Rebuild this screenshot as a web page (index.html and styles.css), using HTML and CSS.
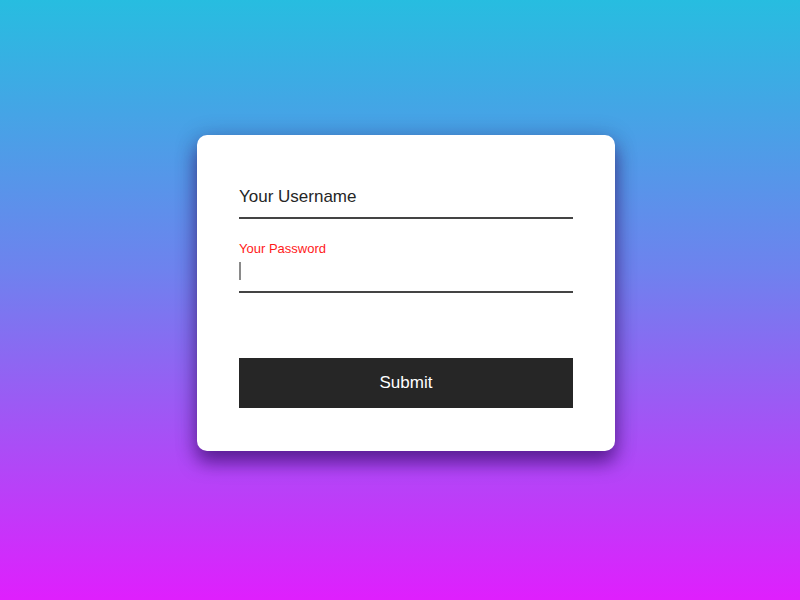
FILE: index.html
```html
<!DOCTYPE html>
<html lang="en">
<head>
  <meta charset="UTF-8" />
  <meta name="viewport" content="width=device-width, initial-scale=1" />
  <title>Login</title>
  <link rel="stylesheet" href="styles.css">
</head>
<body>
  <form class="login-card">
    <div class="field">
      <input type="text" class="field-input username" placeholder="Your Username" />
    </div>

    <div class="field field-active">
      <label class="field-label" for="password">Your Password</label>
      <div class="input-wrap">
        <input type="password" id="password" class="field-input" />
        <span class="caret"></span>
      </div>
    </div>

    <button type="submit" class="submit-btn">Submit</button>
  </form>
</body>
</html>
```

FILE: styles.css
```css
/* Gradient login card */
html, body {
  height: 100%;
}

body {
  margin: 0;
  font-family: 'Liberation Sans', Arial, sans-serif;
  background: linear-gradient(180deg, #27bde0 0%, #6e82ee 45%, #df1ffd 100%);
  display: flex;
  justify-content: center;
  align-items: flex-start;
  padding: 135px 0 0 12px;
  box-sizing: border-box;
}

.login-card {
  width: 418px;
  box-sizing: border-box;
  background: #fff;
  border-radius: 10px;
  padding: 47px 42px 43px;
  box-shadow: 0 12px 18px rgba(45, 0, 95, 0.55), 0 2px 22px rgba(20, 10, 60, 0.25);
  display: flex;
  flex-direction: column;
}

/* Fields */
.field {
  display: flex;
  flex-direction: column;
}

.field + .field {
  margin-top: 22px;
}

.field-input {
  height: 37px;
  box-sizing: border-box;
  border: none;
  border-bottom: 2px solid #444;
  padding: 0;
  font-family: inherit;
  font-size: 17px;
  color: #222;
  outline: none;
  background: transparent;
}

.username {
  padding-bottom: 6px;
}

.field-input::placeholder {
  color: #262626;
  opacity: 1;
}

.field-label {
  font-size: 13px;
  line-height: 15px;
  color: #ff1a1a;
}

.input-wrap {
  position: relative;
  display: flex;
  flex-direction: column;
}

.caret {
  position: absolute;
  left: 0;
  top: 6px;
  width: 2px;
  height: 18px;
  background: #8a8a8a;
}

/* Button */
.submit-btn {
  margin-top: 65px;
  height: 50px;
  border: none;
  background: #262626;
  color: #fff;
  font-family: inherit;
  font-size: 17px;
  cursor: pointer;
}
```
